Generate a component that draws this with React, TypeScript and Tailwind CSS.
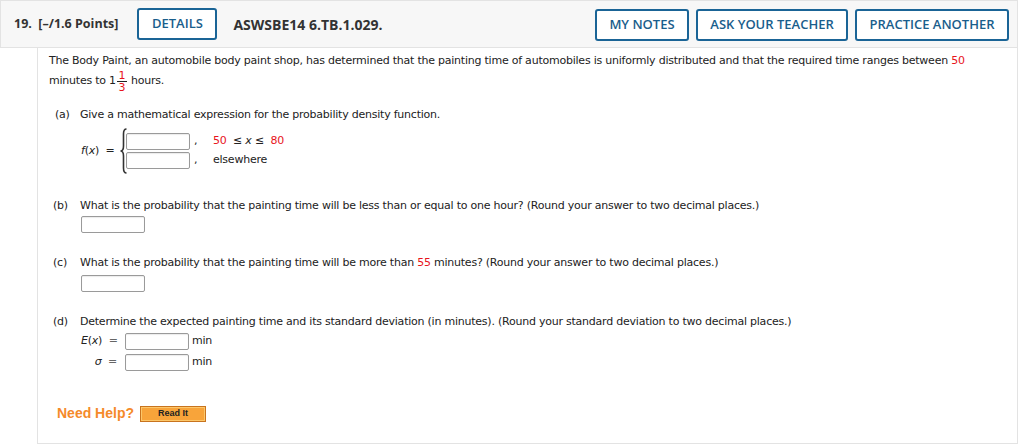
import React from 'react';

const sans = { fontFamily: '"Open Sans", "Liberation Sans", sans-serif' };

const HeaderButton: React.FC<{ label: string; width: string }> = ({ label, width }) => (
	<button
		className={`h-[32px] ${width} rounded-[3px] border-2 border-[#1a6496] bg-white text-[13px] font-semibold text-[#1a5e8c] flex items-center justify-center`}
	>
		{label}
	</button>
);

const Box: React.FC<{ w?: string }> = ({ w = 'w-[64px]' }) => (
	<div className={`${w} h-[17px] border border-[#9a9a9a] rounded-[2px] bg-white shadow-[inset_0_1px_1px_rgba(0,0,0,0.08)]`} />
);

const Red: React.FC<{ children: React.ReactNode }> = ({ children }) => (
	<span className="text-[#e8141c]">{children}</span>
);

export default function App() {
	return (
		<div className="w-[1024px] h-[445px] bg-white text-[#222] overflow-hidden">
			<div
				style={sans}
				className="w-[1018px] h-[48px] bg-[#f7f7f7] border border-[#e3e3e3] flex items-center pl-[13px] pr-[8px]"
			>
				<span className="text-[12.5px] font-bold text-[#333]">19.&nbsp; [–/1.6 Points]</span>
				<div className="ml-[19px]">
					<HeaderButton label="DETAILS" width="w-[80px]" />
				</div>
				<span className="ml-[16px] text-[14px] font-bold text-[#333]">ASWSBE14 6.TB.1.029.</span>
				<div className="ml-auto flex gap-[7px] pt-[2px]">
					<HeaderButton label="MY NOTES" width="w-[94px]" />
					<HeaderButton label="ASK YOUR TEACHER" width="w-[152px]" />
					<HeaderButton label="PRACTICE ANOTHER" width="w-[154px]" />
				</div>
			</div>

			<div
				style={{ fontFamily: '"DejaVu Sans", Verdana, sans-serif' }}
				className="ml-[37px] w-[981px] h-[396px] border-l border-r border-b border-[#e3e3e3] text-[11px] tracking-[-0.23px] text-[#222] pl-[11px] pt-[3px]"
			>
				<p className="leading-[20px]">
					The Body Paint, an automobile body paint shop, has determined that the painting time of automobiles is uniformly distributed and that the required time ranges between <Red>50</Red>
				</p>
				<div className="h-[20px] flex items-center">
					<span>minutes to 1</span>
					<span className="inline-flex flex-col items-center ml-[1px] mr-[1px] text-[#e8141c] leading-[11px] text-[11px]">
						<span>1</span>
						<span className="w-[10px] border-t border-[#222]" />
						<span>3</span>
					</span>
					<span>&nbsp;hours.</span>
				</div>

				<div className="mt-[17px] flex leading-[14px]">
					<span className="w-[31px] pl-[6px]">(a)</span>
					<span>Give a mathematical expression for the probability density function.</span>
				</div>

				<div className="mt-[6px] ml-[32px] h-[46px] flex items-center">
					<span className="w-[39px]"><i>f</i>(<i>x</i>)&nbsp; =</span>
					<svg width="7" height="46" viewBox="0 0 7 46" className="mr-[-1px]">
						<path d="M6.5 1 C4 1 3.5 3 3.5 6 L3.5 18 C3.5 21 2.5 23 0.5 23 C2.5 23 3.5 25 3.5 28 L3.5 40 C3.5 43 4 45 6.5 45" fill="none" stroke="#333" strokeWidth="1.6" />
					</svg>
					<div className="flex flex-col gap-[2px]">
						<div className="flex items-center">
							<Box />
							<span className="ml-[4px] w-[19px]">,</span>
							<span><Red>50</Red> &nbsp;≤ <i>x</i> ≤ &nbsp;<Red>80</Red></span>
						</div>
						<div className="flex items-center">
							<Box />
							<span className="ml-[4px] w-[19px]">,</span>
							<span>elsewhere</span>
						</div>
					</div>
				</div>

				<div className="mt-[25px] flex leading-[14px]">
					<span className="w-[31px] pl-[4px]">(b)</span>
					<span>What is the probability that the painting time will be less than or equal to one hour? (Round your answer to two decimal places.)</span>
				</div>
				<div className="mt-[3px] ml-[32px]"><Box /></div>

				<div className="mt-[23px] flex leading-[14px]">
					<span className="w-[31px] pl-[4px]">(c)</span>
					<span>What is the probability that the painting time will be more than <Red>55</Red> minutes? (Round your answer to two decimal places.)</span>
				</div>
				<div className="mt-[5px] ml-[32px]"><Box /></div>

				<div className="mt-[23px] flex leading-[14px]">
					<span className="w-[31px] pl-[4px]">(d)</span>
					<span>Determine the expected painting time and its standard deviation (in minutes). (Round your standard deviation to two decimal places.)</span>
				</div>
				<div className="mt-[4px] ml-[32px] flex flex-col gap-[4px]">
					<div className="flex items-center h-[17px]">
						<span className="w-[44px]"><i>E</i>(<i>x</i>)&nbsp; <span className="text-[#666]">=</span></span>
						<Box />
						<span className="ml-[3px]">min</span>
					</div>
					<div className="flex items-center h-[17px]">
						<span className="w-[44px] text-right pr-[8px]"><i>σ</i>&nbsp; <span className="text-[#666]">=</span></span>
						<Box />
						<span className="ml-[3px]">min</span>
					</div>
				</div>

				<div className="mt-[34px] ml-[8px] h-[17px] flex items-center" style={{ fontFamily: '"Liberation Sans", Arial, sans-serif' }}>
					<span className="text-[14px] font-bold text-[#f58a2a] tracking-normal">Need Help?</span>
					<button className="ml-[6px] w-[66px] h-[16px] border border-[#c8731e] bg-[#f8a43a] shadow-[inset_0_0_0_1px_#fcc76a] text-[9px] font-bold text-[#222] tracking-normal flex items-center justify-center">
						Read It
					</button>
				</div>
			</div>
		</div>
	);
}
